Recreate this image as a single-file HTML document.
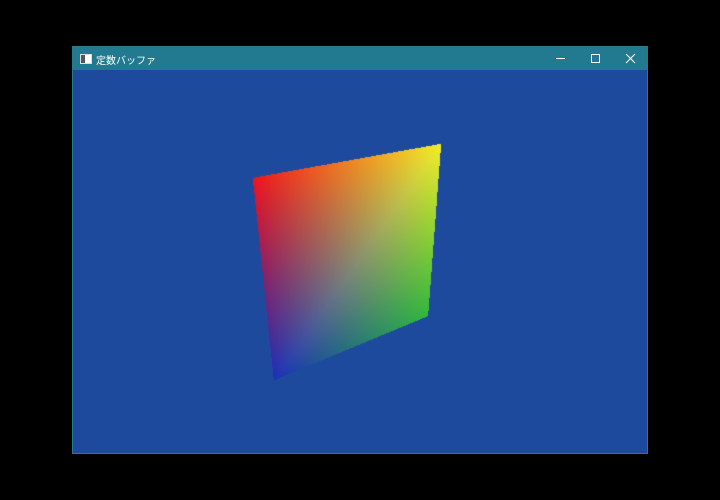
<!DOCTYPE html>
<html><head><meta charset="utf-8"><style>
body{margin:0;width:720px;height:500px;background:#000;position:relative;overflow:hidden;font-family:"Liberation Sans","Noto Sans CJK JP",sans-serif}
.win{position:absolute;left:72px;top:46px;width:576px;height:408px;background:#1e4a9e;box-sizing:border-box;border:1px solid #2a7a8c}
.tb{position:absolute;left:0;top:0;width:100%;height:23px;background:#217a8f;color:#fff;font-size:11px}
.ic{position:absolute;left:7px;top:7px;width:10px;height:8px;border:1px solid #ddd;background:#fff}
.ic:after{content:"";position:absolute;left:0;top:0;width:4px;height:8px;background:#555}
.t{position:absolute;left:23px;top:5px;font-size:10px}
canvas{position:absolute;left:0;top:0}
</style></head><body>
<div class="win">
<div class="tb"><div class="ic"></div><div class="t">定数バッファ</div>
<svg style="position:absolute;left:470px;top:0" width="106" height="23">
<line x1="13" y1="11.5" x2="22" y2="11.5" stroke="#fff" stroke-width="1"/>
<rect x="48.5" y="7.5" width="8" height="8" fill="none" stroke="#fff"/>
<path d="M83 7 L92 16 M92 7 L83 16" stroke="#fff" stroke-width="1.1"/>
</svg></div>
</div>
<canvas id="c" width="720" height="500"></canvas>
<script>
var c=document.getElementById('c'),g=c.getContext('2d');
var img=g.createImageData(720,500),d=img.data;
var P={tl:[253,178],tr:[441,144],br:[428,316],bl:[274,380]};
var C={tl:[237,20,30],tr:[242,238,40],br:[50,185,60],bl:[28,48,185]};
function tri(a,b,cc){
var A=P[a],B=P[b],Q=P[cc],ca=C[a],cb=C[b],cq=C[cc];
var minx=Math.floor(Math.min(A[0],B[0],Q[0])),maxx=Math.ceil(Math.max(A[0],B[0],Q[0]));
var miny=Math.floor(Math.min(A[1],B[1],Q[1])),maxy=Math.ceil(Math.max(A[1],B[1],Q[1]));
var den=(B[1]-Q[1])*(A[0]-Q[0])+(Q[0]-B[0])*(A[1]-Q[1]);
for(var y=miny;y<=maxy;y++)for(var x=minx;x<=maxx;x++){
var px=x+0.5,py=y+0.5;
var w1=((B[1]-Q[1])*(px-Q[0])+(Q[0]-B[0])*(py-Q[1]))/den;
var w2=((Q[1]-A[1])*(px-Q[0])+(A[0]-Q[0])*(py-Q[1]))/den;
var w3=1-w1-w2;
if(w1<-0.001||w2<-0.001||w3<-0.001)continue;
var i=(y*720+x)*4;
for(var k=0;k<3;k++)d[i+k]=ca[k]*w1+cb[k]*w2+cq[k]*w3;
d[i+3]=255;}
}
tri('tl','tr','bl');tri('tr','br','bl');
g.putImageData(img,0,0);
</script>
</body></html>
